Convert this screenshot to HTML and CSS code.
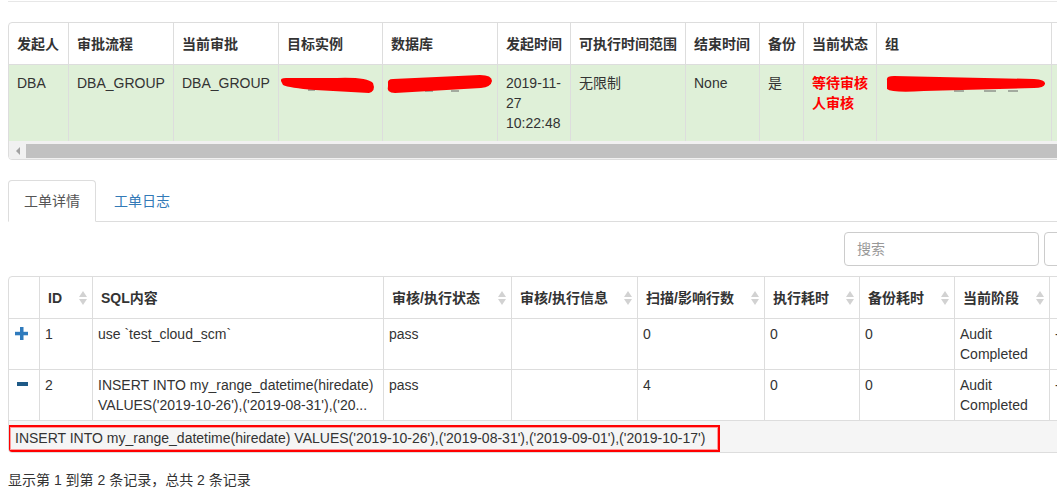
FILE: index.html
```html
<!DOCTYPE html>
<html>
<head>
<meta charset="utf-8">
<link rel="stylesheet" href="styles.css">
</head>
<body>
<div class="page">
  <div class="topline"></div>

  <div class="tbox tbox-top">
    <table class="grid grid-top">
      <colgroup>
        <col class="w59"><col class="w105"><col class="w105"><col class="w104"><col class="w115"><col class="w73"><col class="w115"><col class="w74"><col class="w44"><col class="w73"><col class="w175"><col class="w56">
      </colgroup>
      <thead>
        <tr>
          <th><div class="th-inner">发起人</div></th>
          <th><div class="th-inner">审批流程</div></th>
          <th><div class="th-inner">当前审批</div></th>
          <th><div class="th-inner">目标实例</div></th>
          <th><div class="th-inner">数据库</div></th>
          <th><div class="th-inner">发起时间</div></th>
          <th><div class="th-inner">可执行时间范围</div></th>
          <th><div class="th-inner">结束时间</div></th>
          <th><div class="th-inner">备份</div></th>
          <th><div class="th-inner">当前状态</div></th>
          <th><div class="th-inner">组</div></th>
          <th><div class="th-inner"></div></th>
        </tr>
      </thead>
      <tbody>
        <tr>
          <td>DBA</td>
          <td>DBA_GROUP</td>
          <td>DBA_GROUP</td>
          <td>
            <svg class="redact redact-inst" width="98" height="20" viewBox="0 0 98 20">
              <path d="M29,15 L36,15" stroke="#666" stroke-width="1"/>
              <path d="M2,6 Q1,3 7,3 L58,3 Q88,2 94,8 Q97,16 90,18 L36,15 Q10,13 4,10 Z" fill="#ff0000"/>
            </svg>
          </td>
          <td>
            <svg class="redact redact-db" width="110" height="20" viewBox="0 0 110 20">
              <path d="M40,17 L48,17 M66,17 L74,17" stroke="#666" stroke-width="1"/>
              <path d="M3,10 Q2,5 8,5 L95,1 Q107,1 107,7 Q106,13 96,14 L10,19 Q1,19 3,12 Z" fill="#ff0000"/>
            </svg>
          </td>
          <td>2019-11-<wbr>27 10:22:48</td>
          <td>无限制</td>
          <td>None</td>
          <td>是</td>
          <td class="status">等待审核人审核</td>
          <td>
            <svg class="redact redact-grp" width="164" height="20" viewBox="0 0 164 20">
              <path d="M70,16 L80,16 M100,16 L112,16 M124,16 L134,16" stroke="#666" stroke-width="1"/>
              <path d="M3,5 Q2,1 10,1 L150,4 Q162,5 161,9 Q160,13 150,13 L40,16 Q8,18 3,14 Z" fill="#ff0000"/>
            </svg>
          </td>
          <td></td>
        </tr>
      </tbody>
    </table>
    <div class="hscroll">
      <div class="hs-btn"><span class="hs-arrow"></span></div>
      <div class="hs-thumb"></div>
    </div>
  </div>

  <ul class="tabs">
    <li class="tab active">工单详情</li>
    <li class="tab">工单日志</li>
  </ul>

  <div class="toolbar">
    <div class="search">搜索</div>
    <div class="tool-btn"></div>
  </div>

  <div class="tbox">
    <table class="grid grid-detail">
      <colgroup>
        <col class="w30"><col class="w53"><col class="w291"><col class="w128"><col class="w126"><col class="w127"><col class="w95"><col class="w95"><col class="w95"><col class="w58">
      </colgroup>
      <thead>
        <tr>
          <th><div class="th-inner"></div></th>
          <th><div class="th-inner sortable">ID<span class="sort"></span></div></th>
          <th><div class="th-inner">SQL内容</div></th>
          <th><div class="th-inner sortable">审核/执行状态<span class="sort"></span></div></th>
          <th><div class="th-inner sortable">审核/执行信息<span class="sort"></span></div></th>
          <th><div class="th-inner sortable">扫描/影响行数<span class="sort"></span></div></th>
          <th><div class="th-inner sortable">执行耗时<span class="sort"></span></div></th>
          <th><div class="th-inner sortable">备份耗时<span class="sort"></span></div></th>
          <th><div class="th-inner sortable">当前阶段<span class="sort"></span></div></th>
          <th><div class="th-inner"></div></th>
        </tr>
      </thead>
      <tbody>
        <tr>
          <td>
            <svg class="ico-plus" width="13" height="13" viewBox="0 0 13 13">
              <rect x="5" y="0" width="3.5" height="13" fill="#2f7bbd"/>
              <rect x="0" y="4.8" width="13" height="3.5" fill="#2f7bbd"/>
            </svg>
          </td>
          <td>1</td>
          <td>use `test_cloud_scm`</td>
          <td>pass</td>
          <td></td>
          <td>0</td>
          <td>0</td>
          <td>0</td>
          <td>Audit Completed</td>
          <td>-</td>
        </tr>
        <tr>
          <td>
            <svg class="ico-minus" width="11" height="4" viewBox="0 0 11 4">
              <rect x="0" y="0" width="11" height="4" fill="#1f5a87"/>
            </svg>
          </td>
          <td>2</td>
          <td>INSERT INTO my_range_datetime(hiredate) VALUES('2019-10-26'),('2019-08-31'),('20...</td>
          <td>pass</td>
          <td></td>
          <td>4</td>
          <td>0</td>
          <td>0</td>
          <td>Audit Completed</td>
          <td>-</td>
        </tr>
        <tr class="detail-row">
          <td colspan="10"><span class="sql-full">INSERT INTO my_range_datetime(hiredate) VALUES('2019-10-26'),('2019-08-31'),('2019-09-01'),('2019-10-17')</span></td>
        </tr>
      </tbody>
    </table>
  </div>

  <div class="pagination-detail">显示第 1 到第 2 条记录，总共 2 条记录</div>
</div>
</body>
</html>
```

FILE: styles.css
```css
* { box-sizing: border-box; }

html, body {
  margin: 0;
  padding: 0;
  overflow: hidden;
  background: #fff;
}

body {
  font-family: "Liberation Sans", "Noto Sans CJK SC", sans-serif;
  font-size: 14px;
  line-height: 20px;
  color: #333;
}

.page {
  width: 1100px;
  margin-left: 8px;
}

.topline {
  height: 1px;
  margin-top: 1px;
  background: #e7e7e7;
}

.tbox {
  border: 1px solid #ddd;
  border-radius: 4px;
  overflow: hidden;
}

.tbox-top { margin-top: 20px; }

.grid {
  border-collapse: separate;
  border-spacing: 0;
  table-layout: fixed;
  width: 1098px;
}

.grid th {
  padding: 0;
  text-align: left;
  font-weight: bold;
  vertical-align: bottom;
  border-left: 1px solid #ddd;
  border-bottom: 1px solid #ddd;
}

.grid th:first-child,
.grid td:first-child { border-left: none; }

.th-inner {
  padding: 8px;
  line-height: 24px;
  height: 41px;
  white-space: nowrap;
  overflow: hidden;
  display: flex;
  align-items: center;
  justify-content: space-between;
}

.th-inner.sortable { padding-right: 5px; }

.sort {
  display: flex;
  flex-direction: column;
  gap: 2px;
  flex: none;
}
.sort::before,
.sort::after {
  content: "";
  display: block;
  width: 0;
  height: 0;
  border-left: 4px solid transparent;
  border-right: 4px solid transparent;
}
.sort::before { border-bottom: 6px solid #d2d2d2; }
.sort::after { border-top: 6px solid #d2d2d2; }

.w30 { width: 30px; }
.w44 { width: 44px; }
.w53 { width: 53px; }
.w56 { width: 56px; }
.w58 { width: 58px; }
.w59 { width: 59px; }
.w73 { width: 73px; }
.w74 { width: 74px; }
.w95 { width: 95px; }
.w104 { width: 104px; }
.w105 { width: 105px; }
.w115 { width: 115px; }
.w126 { width: 126px; }
.w127 { width: 127px; }
.w128 { width: 128px; }
.w175 { width: 175px; }
.w291 { width: 291px; }

.grid-top td {
  padding: 8px;
  vertical-align: top;
  border-left: 1px solid #ddd;
  background: #dff0d8;
}

.status {
  color: #ff0000;
  font-weight: bold;
}

.redact { display: block; }
.redact-inst { margin: 2px 0 0 -8px; }
.redact-db { margin: 1px 0 0 -6px; }
.redact-grp { margin: 2px 0 0 -1px; }

.hscroll {
  display: flex;
  height: 18px;
  background: #f1f1f1;
}
.hs-btn {
  width: 17px;
  flex: none;
  display: flex;
  align-items: center;
  justify-content: center;
  padding-top: 2px;
}
.hs-arrow {
  width: 0;
  height: 0;
  border-top: 4px solid transparent;
  border-bottom: 4px solid transparent;
  border-right: 4px solid #a3a3a3;
}
.hs-thumb {
  flex: 1;
  margin: 3px 0 1px;
  background: #c1c1c1;
}

.tabs {
  display: flex;
  list-style: none;
  margin: 20px 0 0;
  padding: 0;
  border-bottom: 1px solid #ddd;
}
.tab {
  margin-right: 2px;
  margin-bottom: -1px;
  padding: 10px 15px;
  border: 1px solid transparent;
  border-radius: 4px 4px 0 0;
  color: #337ab7;
  line-height: 20px;
}
.tab.active {
  color: #555;
  background: #fff;
  border-color: #ddd;
  border-bottom-color: transparent;
}

.toolbar {
  display: flex;
  justify-content: flex-end;
  margin: 10px 0;
}
.search {
  width: 195px;
  height: 34px;
  padding: 6px 12px;
  border: 1px solid #ccc;
  border-radius: 4px;
  color: #999;
  line-height: 20px;
}
.tool-btn {
  width: 64px;
  height: 34px;
  margin-left: 5px;
  border: 1px solid #ccc;
  border-radius: 4px;
  background: #fff;
}

.grid-detail td {
  padding: 5px;
  vertical-align: top;
  border-left: 1px solid #ddd;
  border-top: 1px solid #ddd;
}
.grid-detail tbody tr:first-child td { border-top: none; }

.ico-plus { display: block; margin: 3px 0 0 1px; }
.ico-minus { display: block; margin: 7px 0 0 3px; }

.grid-detail .detail-row td {
  padding: 4px 0 0;
  background: #f5f5f5;
}

.sql-full {
  display: inline-block;
  margin-left: -1px;
  padding: 1px 13px 2px 5px;
  border: 2px solid #ff0000;
  line-height: 20px;
  box-shadow: inset 0 0 0 1px #ff9a9a;
}

.pagination-detail {
  margin: 10px 0;
  line-height: 34px;
}
```
